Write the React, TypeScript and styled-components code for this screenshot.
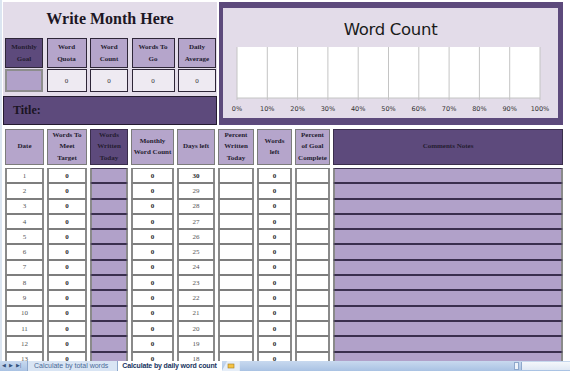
import React from "react";
import styled, { createGlobalStyle } from "styled-components";

const Global = createGlobalStyle`
  html, body { margin: 0; padding: 0; overflow: hidden; background: #ffffff; }
  * { box-sizing: border-box; }
`;

const DARK = "#5d4a7c";
const LAV = "#b5a5cb";
const CELL_LAV = "#b1a1c9";
const PANEL = "#e3dce9";
const SERIF = `"Liberation Serif", "DejaVu Serif", serif`;

const Page = styled.div`
  width: 570px;
  height: 371px;
  display: flex;
  flex-direction: column;
  background: #ffffff;
  overflow: hidden;
`;

const Sheet = styled.div`
  flex: 1;
  min-height: 0;
  overflow: hidden;
  display: flex;
  flex-direction: column;
  padding: 2px 0 0 1px;
  border-left: 2px solid #dbe5f1;
`;

const Top = styled.div`
  display: flex;
  gap: 2px;
  height: 123px;
  flex-shrink: 0;
`;

const LeftPanel = styled.div`
  width: 214px;
  background: ${PANEL};
  display: flex;
  flex-direction: column;
  padding-top: 1px;
`;

const MonthTitle = styled.div`
  height: 35px;
  display: flex;
  align-items: center;
  justify-content: center;
  font-family: ${SERIF};
  font-weight: bold;
  font-size: 16px;
  color: #1c1624;
  padding-bottom: 3px;
`;

const StatGrid = styled.div`
  display: grid;
  grid-template-columns: 38px 40px 38px 43px 38px;
  grid-template-rows: 30px 23px;
  column-gap: 3.5px;
  row-gap: 1px;
  padding-left: 2px;
`;

const StatHead = styled.div<{ $dark?: boolean }>`
  background: ${(p) => (p.$dark ? DARK : LAV)};
  border: 1px solid #2e2638;
  display: flex;
  align-items: center;
  justify-content: center;
  text-align: center;
  font-family: ${SERIF};
  font-weight: bold;
  font-size: 7px;
  line-height: 12px;
  color: #241c30;
`;

const StatValue = styled.div<{ $selected?: boolean }>`
  background: ${(p) => (p.$selected ? CELL_LAV : "#eeeaf2")};
  border: ${(p) => (p.$selected ? "2px solid #8d8d8d" : "1px solid #2e2638")};
  display: flex;
  align-items: center;
  justify-content: center;
  font-family: ${SERIF};
  font-size: 7px;
  color: #333;
`;

const TitleBar = styled.div`
  margin-top: 4px;
  height: 29px;
  background: ${DARK};
  border: 1px solid #241b30;
  display: flex;
  align-items: center;
  padding-left: 9px;
  font-family: ${SERIF};
  font-weight: bold;
  font-size: 12px;
  color: #1a1422;
`;

const ChartPanel = styled.div`
  width: 344px;
  height: 123px;
  background: ${PANEL};
  border: 5px solid ${DARK};
  border-left-width: 4px;
  border-top-width: 6px;
  border-bottom-width: 7px;
  display: flex;
  flex-direction: column;
`;

const ChartTitle = styled.div`
  height: 39px;
  display: flex;
  align-items: center;
  justify-content: center;
  padding-top: 4px;
  font-family: "DejaVu Sans", sans-serif;
  font-size: 16.5px;
  letter-spacing: -0.3px;
  color: #1a1a1a;
`;

const LabelText = styled.text`
  font-family: "DejaVu Sans", sans-serif;
  font-size: 6.5px;
  fill: #333;
`;

const Table = styled.div`
  margin-top: 4px;
  margin-left: 2px;
  display: grid;
  grid-template-columns: 39px 40px 38px 43px 38px 36px 35px 35px 230px;
  grid-template-rows: 39px;
  grid-auto-rows: 15.3px;
  column-gap: 3px;
`;

const HeadCell = styled.div<{ $dark?: boolean }>`
  background: ${(p) => (p.$dark ? DARK : LAV)};
  border: 1px solid ${(p) => (p.$dark ? "#3a2e4c" : "#7c7c7c")};
  margin-bottom: 3px;
  display: flex;
  align-items: center;
  justify-content: center;
  text-align: center;
  font-family: ${SERIF};
  font-weight: bold;
  font-size: 7px;
  line-height: 11.5px;
  color: #241c30;
`;

const Cell = styled.div<{ $fill?: boolean; $bold?: boolean }>`
  background: ${(p) => (p.$fill ? CELL_LAV : "#ffffff")};
  border-left: 2px solid #8a8a8a;
  border-right: 2px solid #8a8a8a;
  border-top: 1px solid ${(p) => (p.$fill ? "#3a2f4e" : "#7e7e7e")};
  border-bottom: 1px solid ${(p) => (p.$fill ? "#3a2f4e" : "#7e7e7e")};
  display: flex;
  align-items: center;
  justify-content: center;
  font-family: ${SERIF};
  font-size: 7px;
  font-weight: ${(p) => (p.$bold ? "bold" : "normal")};
  color: ${(p) => (p.$bold ? "#2a2a2a" : "#555")};
`;

const TabBar = styled.div`
  height: 10px;
  flex-shrink: 0;
  display: flex;
  align-items: stretch;
  background: linear-gradient(#c8d9ef, #a9c2e3);
  font-family: "Liberation Sans", Arial, sans-serif;
  font-size: 7px;
  line-height: 10px;
`;

const NavArrows = styled.div`
  width: 27px;
  display: flex;
  align-items: center;
  gap: 3px;
  padding-left: 2px;
  font-size: 4.5px;
  line-height: 10px;
  color: #33507a;
`;

const Tab = styled.div<{ $active?: boolean }>`
  padding: 0 ${(p) => (p.$active ? "5px" : "9px")} 0 ${(p) => (p.$active ? "4px" : "6px")};
  background: ${(p) => (p.$active ? "#ffffff" : "#d9e5f4")};
  color: ${(p) => (p.$active ? "#17335e" : "#4a6a98")};
  font-weight: ${(p) => (p.$active ? "bold" : "normal")};
  letter-spacing: ${(p) => (p.$active ? "-0.15px" : "0")};
  white-space: nowrap;
  border-left: 1px solid #8ea8cc;
`;

const NewSheet = styled.div`
  width: 18px;
  background: #e6eef8;
  clip-path: polygon(30% 0, 100% 0, 100% 100%, 0 100%);
  display: flex;
  justify-content: center;
  align-items: center;
`;

const Spacer = styled.div`
  flex: 1;
`;

const Scroll = styled.div`
  width: 56px;
  display: flex;
  align-items: center;
  gap: 2px;
`;

const ScrollKnob = styled.div`
  width: 5px;
  height: 8px;
  background: #eef3fa;
  border: 1px solid #8ea8cc;
`;

const ScrollTrack = styled.div`
  flex: 1;
  height: 8px;
  background: linear-gradient(#f4f7fb, #dfe8f4);
  border-left: 1px solid #8ea8cc;
`;

const stats = [
  { label: ["Monthly", "Goal"], dark: true },
  { label: ["Word", "Quota"] },
  { label: ["Word", "Count"] },
  { label: ["Words To", "Go"] },
  { label: ["Daily", "Average"] },
];

const headers: { label: string[]; dark?: boolean }[] = [
  { label: ["Date"] },
  { label: ["Words To", "Meet", "Target"] },
  { label: ["Words", "Written", "Today"], dark: true },
  { label: ["Monthly", "Word Count"] },
  { label: ["Days left"] },
  { label: ["Percent", "Written", "Today"] },
  { label: ["Words", "left"] },
  { label: ["Percent", "of Goal", "Complete"] },
  { label: ["Comments Notes"], dark: true },
];

const Lines = ({ lines }: { lines: string[] }) => (
  <span>
    {lines.map((l, i) => (
      <React.Fragment key={i}>
        {i > 0 && <br />}
        {l}
      </React.Fragment>
    ))}
  </span>
);

const Chart = () => {
  const w = 335;
  const x0 = 14;
  const pw = 303;
  return (
    <svg width={w} height={71} viewBox={`0 0 ${w} 71`}>
      <rect x={x0} y={0} width={pw} height={51} fill="#ffffff" />
      {Array.from({ length: 11 }).map((_, i) => {
        const x = x0 + (pw * i) / 10;
        return (
          <g key={i}>
            <line x1={x} y1={0} x2={x} y2={53} stroke="#c4c4c4" strokeWidth={1} />
            <LabelText x={x} y={64} textAnchor="middle">
              {i * 10}%
            </LabelText>
          </g>
        );
      })}
      <line x1={x0} y1={51} x2={x0 + pw} y2={51} stroke="#c4c4c4" strokeWidth={1} />
    </svg>
  );
};

export default function App() {
  const rows = Array.from({ length: 14 }, (_, i) => i + 1);
  return (
    <Page>
      <Global />
      <Sheet>
        <Top>
          <LeftPanel>
            <MonthTitle>Write Month Here</MonthTitle>
            <StatGrid>
              {stats.map((s, i) => (
                <StatHead key={"h" + i} $dark={s.dark}>
                  <Lines lines={s.label} />
                </StatHead>
              ))}
              {stats.map((s, i) => (
                <StatValue key={"v" + i} $selected={i === 0}>
                  {i === 0 ? "" : "0"}
                </StatValue>
              ))}
            </StatGrid>
            <TitleBar>Title:</TitleBar>
          </LeftPanel>
          <ChartPanel>
            <ChartTitle>Word Count</ChartTitle>
            <Chart />
          </ChartPanel>
        </Top>
        <Table>
          {headers.map((h, i) => (
            <HeadCell key={"th" + i} $dark={h.dark}>
              <Lines lines={h.label} />
            </HeadCell>
          ))}
          {rows.map((r) => (
            <React.Fragment key={r}>
              <Cell>{r}</Cell>
              <Cell $bold>0</Cell>
              <Cell $fill />
              <Cell $bold>0</Cell>
              <Cell $bold={r === 1}>{31 - r}</Cell>
              <Cell />
              <Cell $bold>0</Cell>
              <Cell />
              <Cell $fill />
            </React.Fragment>
          ))}
        </Table>
      </Sheet>
      <TabBar>
        <NavArrows>
          <span>◀</span>
          <span>▶</span>
          <span>▶|</span>
        </NavArrows>
        <Tab>Calculate by total words</Tab>
        <Tab $active>Calculate by daily word count</Tab>
        <NewSheet>
          <svg width="8" height="6" viewBox="0 0 8 6">
            <rect x="1" y="1" width="6" height="4" fill="#f6c343" stroke="#a07a20" strokeWidth="0.6" />
          </svg>
        </NewSheet>
        <Spacer />
        <Scroll>
          <ScrollKnob />
          <ScrollTrack />
        </Scroll>
      </TabBar>
    </Page>
  );
}
